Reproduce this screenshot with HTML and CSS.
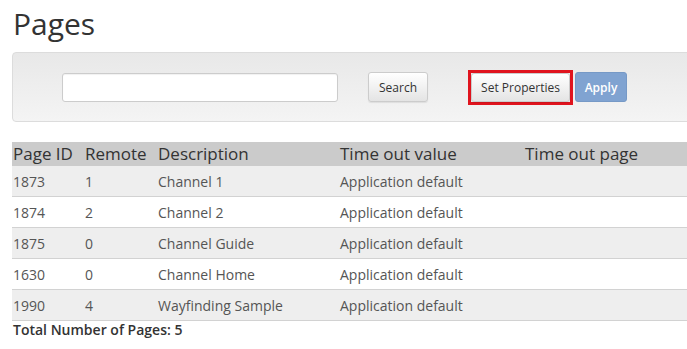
FILE: index.html
```html
<!DOCTYPE html>
<html>
<head>
<meta charset="utf-8">
<link rel="stylesheet" href="styles.css">
</head>
<body>
<div class="page">
  <h1 class="title">Pages</h1>
  <div class="toolbar">
    <input class="search-input" type="text">
    <button class="btn btn-search">Search</button>
    <div class="highlight">
      <button class="btn btn-props">Set Properties</button>
    </div>
    <button class="btn btn-apply">Apply</button>
  </div>
  <table class="grid">
    <colgroup>
      <col class="c1"><col class="c2"><col class="c3"><col class="c4"><col class="c5">
    </colgroup>
    <thead>
      <tr><th>Page ID</th><th>Remote</th><th>Description</th><th>Time out value</th><th>Time out page</th></tr>
    </thead>
    <tbody>
      <tr class="odd"><td>1873</td><td>1</td><td>Channel 1</td><td>Application default</td><td></td></tr>
      <tr><td>1874</td><td>2</td><td>Channel 2</td><td>Application default</td><td></td></tr>
      <tr class="odd"><td>1875</td><td>0</td><td>Channel Guide</td><td>Application default</td><td></td></tr>
      <tr><td>1630</td><td>0</td><td>Channel Home</td><td>Application default</td><td></td></tr>
      <tr class="odd"><td>1990</td><td>4</td><td>Wayfinding Sample</td><td>Application default</td><td></td></tr>
    </tbody>
  </table>
  <div class="total">Total Number of Pages: 5</div>
</div>
</body>
</html>
```
FILE: styles.css
```css
html, body {
  margin: 0;
  padding: 0;
  background: #fff;
  overflow: hidden;
}
body {
  font-family: "Open Sans", "Liberation Sans", sans-serif;
  color: #333;
}
.page {
  padding-left: 12px;
  margin-right: -20px;
}
.title {
  margin: 4px 0 8px 1px;
  font-size: 30px;
  line-height: 40px;
  font-weight: 400;
  color: #333;
}
.toolbar {
  display: flex;
  align-items: center;
  height: 68px;
  padding-left: 49px;
  border: 1px solid #dcdcdc;
  border-radius: 4px;
  background: linear-gradient(#e8e8e8, #f4f4f4);
}
.search-input {
  width: 276px;
  height: 29px;
  box-sizing: border-box;
  margin: 0;
  border: 1px solid #cccccc;
  border-radius: 3px;
  background: #fff;
  box-shadow: inset 0 1px 1px rgba(0,0,0,0.06);
}
.btn {
  font-family: "Open Sans", "Liberation Sans", sans-serif;
  font-size: 12px;
  height: 30px;
  box-sizing: border-box;
  margin: 0;
  padding: 0;
  border-radius: 3px;
  cursor: pointer;
}
.btn-search, .btn-props {
  color: #333;
  border: 1px solid #cccccc;
  background: linear-gradient(#ffffff, #e4e4e4);
  box-shadow: 0 1px 1px rgba(0,0,0,0.08);
}
.btn-search {
  width: 60px;
  margin-left: 30px;
}
.highlight {
  margin-left: 40px;
  width: 105px;
  height: 35px;
  box-sizing: border-box;
  border: 3px solid #e0141e;
  display: flex;
  align-items: center;
  justify-content: center;
}
.btn-props {
  width: 99px;
  height: 29px;
}
.btn-apply {
  width: 52px;
  margin-left: 2px;
  color: #fff;
  font-weight: 600;
  border: 1px solid #7699c6;
  background: #80a3d1;
}
.grid {
  margin-top: 20px;
  border-collapse: collapse;
  table-layout: fixed;
  width: calc(100% - 8px);
}
.c1 { width: 72px; }
.c2 { width: 73px; }
.c3 { width: 182px; }
.c4 { width: 185px; }
.grid th {
  background: #cbcbcb;
  color: #333;
  font-size: 17px;
  font-weight: 400;
  text-align: left;
  height: 24px;
  padding: 0 0 0 1px;
  line-height: 24px;
  white-space: nowrap;
}
.grid td {
  height: 30px;
  padding: 0 0 0 1px;
  font-size: 14px;
  color: #555;
  border-bottom: 1px solid #d2d2d2;
  white-space: nowrap;
}
.grid tr.odd td {
  background: #eeeeee;
}
.total {
  margin-left: 1px;
  font-size: 14px;
  font-weight: 600;
  line-height: 18px;
  color: #333;
}
```
